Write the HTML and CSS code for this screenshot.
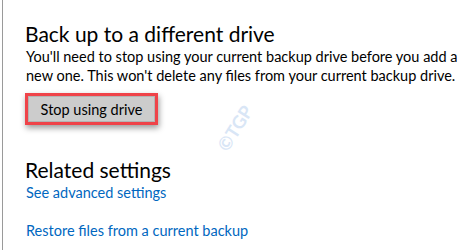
FILE: index.html
```html
<!DOCTYPE html>
<html lang="en">
<head>
  <meta charset="UTF-8">
  <title>Backup settings</title>
  <link rel="stylesheet" href="styles.css">
</head>
<body>
  <div class="frame">
    <div class="pane">
      <h2 class="title">Back up to a different drive</h2>
      <p class="desc">You'll need to stop using your current backup drive before you add a new one. This won't delete any files from your current backup drive.</p>
      <div class="btn-wrap">
        <button class="stop-btn">Stop using drive</button>
      </div>

      <h2 class="title related">Related settings</h2>
      <a class="link" href="#">See advanced settings</a>
      <a class="link last" href="#">Restore files from a current backup</a>
    </div>
    <div class="mark">&copy;TGP</div>
  </div>
</body>
</html>
```

FILE: styles.css
```css
body {
  margin: 0;
  background: white;
  font-family: Lato, 'Noto Sans', sans-serif;
  color: #000;
}

.frame {
  position: relative;
  height: 250px;
  margin-left: 2px;
  border-left: 1px solid #9a9a9a;
  overflow: hidden;
}

.pane {
  padding: 21px 0 0 22px;
  display: flex;
  flex-direction: column;
  align-items: flex-start;
}

.title {
  margin: 0;
  font-size: 21px;
  font-weight: 400;
  line-height: 26px;
}

.desc {
  margin: 0;
  width: 440px;
  font-size: 14.5px;
  line-height: 19px;
  padding-left: 1px;
}

.btn-wrap {
  margin-top: 8px;
  border: 3px solid #ef4349;
  padding: 0;
  box-shadow: 1px 3px 6px rgba(0, 0, 0, 0.4);
}

.stop-btn {
  display: block;
  width: 127px;
  height: 26px;
  background: #cccccc;
  border: 1px solid #b4b4b4;
  font-family: inherit;
  font-size: 14.5px;
  color: #000;
  padding: 0;
}

.related {
  margin-top: 32px;
}

.link {
  color: #0067c0;
  text-decoration: none;
  font-size: 14.5px;
  line-height: 19px;
  padding-left: 1px;
}

.link.last {
  margin-top: 19px;
}

.mark {
  position: absolute;
  left: 207px;
  top: 117px;
  transform: rotate(-58deg);
  color: #d9e6f6;
  font-weight: 700;
  font-size: 18px;
}
```
